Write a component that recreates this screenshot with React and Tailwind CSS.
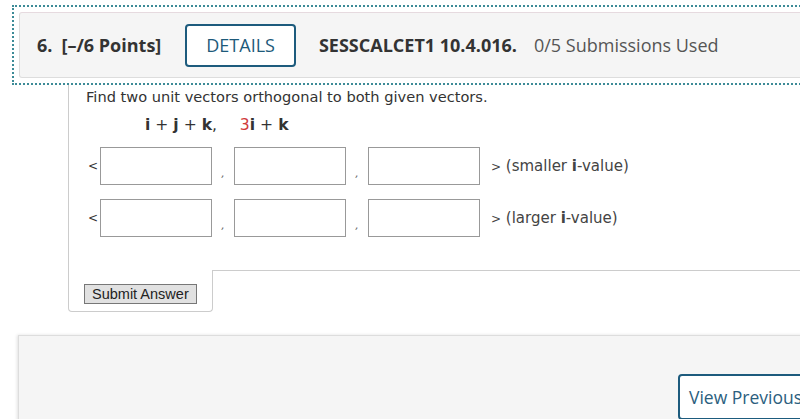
import React from 'react';

const VectorRow = ({ label }) => (
  <div className="flex items-center text-[#333]">
    <span className="w-[12px] text-[12px]">&lt;</span>
    <input className="w-[112px] h-[38px] border border-[#999] bg-white" />
    <span className="w-[22px] text-center text-[11px] pt-[17px] text-[#666] italic">,</span>
    <input className="w-[112px] h-[38px] border border-[#999] bg-white" />
    <span className="w-[22px] text-center text-[11px] pt-[17px] text-[#666] italic">,</span>
    <input className="w-[112px] h-[38px] border border-[#999] bg-white" />
    <span className="ml-[11px] text-[15px] text-[#444]">
      <span className="text-[12px]">&gt;</span> ({label} <b className="font-bold">i</b>-value)
    </span>
  </div>
);

export default function App() {
  return (
    <div className="w-[800px] h-[419px] overflow-hidden bg-white font-['Open_Sans',sans-serif]">
      {/* question header, with focus outline */}
      <div className="pt-[5px] pl-[12px]">
        <div className="w-[800px] border-2 border-dotted border-[#3d8b97] p-[5px]">
          <div className="h-[66px] flex items-center pl-[17px] bg-[#f5f5f5] border border-[#ddd] border-t-[#e6dadf] rounded-[3px] text-[18px] text-[#333]">
            <span className="font-bold">6.</span>
            <span className="font-bold ml-[9px]">[–/6 Points]</span>
            <button className="ml-[24px] h-[43px] px-[19px] border-2 border-[#1d5b7d] rounded-[4px] bg-white text-[#1d5a7a]">
              DETAILS
            </button>
            <span className="font-bold ml-[23px]">SESSCALCET1 10.4.016.</span>
            <span className="ml-[17px] text-[#555]">0/5 Submissions Used</span>
          </div>
        </div>
      </div>

      {/* question body */}
      <div className="ml-[68px] w-[740px] font-['DejaVu_Sans',Verdana,sans-serif]">
        <div className="border-l border-[#ccc] pl-[17px] pt-[2px] pb-[33px]">
          <p className="text-[14.6px] text-[#333] leading-[20px]">
            Find two unit vectors orthogonal to both given vectors.
          </p>
          <p className="ml-[59px] mt-[8px] text-[15.6px] text-[#333] leading-[20px] whitespace-pre">
            <b>i</b> + <b>j</b> + <b>k</b>,{'    '}<span className="ml-[3px] text-[#d03a3a]">3</span><b>i</b> + <b>k</b>
          </p>
          <div className="mt-[12px] ml-[2px] flex flex-col gap-[14px]">
            <VectorRow label="smaller" />
            <VectorRow label="larger" />
          </div>
        </div>
        <div className="flex">
          <div className="w-[145px] h-[42px] border-l border-r border-b border-[#ccc] rounded-b-[4px] pl-[15px] pt-[12px]">
            <button className="h-[20px] px-[7px] bg-[#e1e1e1] border border-[#777] text-[14.5px] leading-[18px] text-[#222] font-['Liberation_Sans',Arial,sans-serif]">
              Submit Answer
            </button>
          </div>
          <div className="flex-1 border-t border-[#ccc]" />
        </div>
      </div>

      {/* footer navigation */}
      <div className="mt-[23px] ml-[18px] w-[840px] h-[120px] bg-[#f5f5f5] border-t border-l border-[#ddd] shadow-[-1px_0_3px_rgba(0,0,0,0.12)] pt-[38px] pl-[659px]">
        <button className="h-[46px] px-[9px] border-2 border-[#1d5b7d] rounded-[4px] bg-white text-[17.5px] text-[#2b5e7e] whitespace-nowrap">
          View Previous Question
        </button>
      </div>
    </div>
  );
}
